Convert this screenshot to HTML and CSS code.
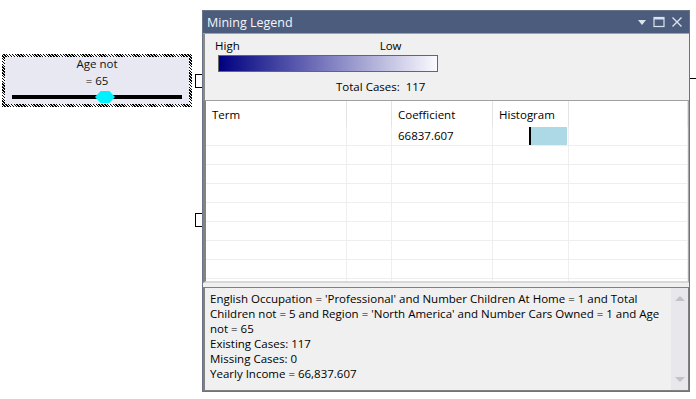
FILE: index.html
```html
<!DOCTYPE html>
<html lang="en">
<head>
    <meta charset="UTF-8">
    <title>Mining Legend</title>
    <link rel="stylesheet" href="styles.css">
</head>
<body>
    <div class="canvas">
        <!-- Tree node -->
        <div class="node">
            <div class="node-label">Age not</div>
            <div class="node-label">= 65</div>
            <div class="node-slider">
                <span class="slider-knob"></span>
            </div>
        </div>
        <div class="connector connector-top"></div>
        <div class="connector connector-mid"></div>
        <div class="edge-line"></div>

        <!-- Mining legend window -->
        <div class="window">
            <div class="titlebar">
                <span class="title">Mining Legend</span>
                <div class="title-buttons">
                    <svg width="10" height="10" viewBox="0 0 10 10"><path d="M1 3h8L5 8z" fill="#dde3ee"/></svg>
                    <svg width="12" height="12" viewBox="0 0 12 12"><rect x="1" y="1.5" width="10" height="9" fill="none" stroke="#dde3ee" stroke-width="1.2"/><rect x="1" y="1.5" width="10" height="2" fill="#dde3ee"/></svg>
                    <svg width="12" height="12" viewBox="0 0 12 12"><path d="M1.5 1.5l9 9M10.5 1.5l-9 9" stroke="#dde3ee" stroke-width="1.4"/></svg>
                </div>
            </div>

            <div class="legend">
                <div class="legend-labels">
                    <span>High</span>
                    <span>Low</span>
                </div>
                <div class="gradient-bar"></div>
                <div class="total">Total Cases:&nbsp; 117</div>
            </div>

            <div class="grid">
                <div class="grid-row grid-head">
                    <div class="cell">Term</div>
                    <div class="cell"></div>
                    <div class="cell">Coefficient</div>
                    <div class="cell">Histogram</div>
                    <div class="cell"></div>
                </div>
                <div class="grid-row">
                    <div class="cell"></div>
                    <div class="cell"></div>
                    <div class="cell">66837.607</div>
                    <div class="cell hist"><span class="hist-bar"></span></div>
                    <div class="cell"></div>
                </div>
                <div class="grid-row"><div class="cell"></div><div class="cell"></div><div class="cell"></div><div class="cell"></div><div class="cell"></div></div>
                <div class="grid-row"><div class="cell"></div><div class="cell"></div><div class="cell"></div><div class="cell"></div><div class="cell"></div></div>
                <div class="grid-row"><div class="cell"></div><div class="cell"></div><div class="cell"></div><div class="cell"></div><div class="cell"></div></div>
                <div class="grid-row"><div class="cell"></div><div class="cell"></div><div class="cell"></div><div class="cell"></div><div class="cell"></div></div>
                <div class="grid-row"><div class="cell"></div><div class="cell"></div><div class="cell"></div><div class="cell"></div><div class="cell"></div></div>
                <div class="grid-row"><div class="cell"></div><div class="cell"></div><div class="cell"></div><div class="cell"></div><div class="cell"></div></div>
                <div class="grid-row"><div class="cell"></div><div class="cell"></div><div class="cell"></div><div class="cell"></div><div class="cell"></div></div>
                <div class="grid-row"><div class="cell"></div><div class="cell"></div><div class="cell"></div><div class="cell"></div><div class="cell"></div></div>
            </div>

            <div class="details">
                <div class="details-text">
                    English Occupation = 'Professional' and Number Children At Home = 1 and Total Children not = 5 and Region = 'North America' and Number Cars Owned = 1 and Age not = 65<br>
                    Existing Cases: 117<br>
                    Missing Cases: 0<br>
                    Yearly Income = 66,837.607
                </div>
                <div class="scrollbar">
                    <svg width="10" height="6" viewBox="0 0 10 6"><path d="M0 6L5 1l5 5z" fill="#c2c2c6"/></svg>
                    <svg width="10" height="6" viewBox="0 0 10 6"><path d="M0 0h10L5 5z" fill="#c2c2c6"/></svg>
                </div>
            </div>
        </div>
    </div>
</body>
</html>
```
FILE: styles.css
```css
/* Page */
body {
    margin: 0;
    background: #fff;
    font-family: 'Open Sans', 'Noto Sans', sans-serif;
    font-size: 11.5px;
    color: #000;
}

.canvas {
    position: relative;
    width: 696px;
    height: 399px;
    overflow: hidden;
}

/* Tree node */
.node {
    position: absolute;
    left: 2px;
    top: 54px;
    width: 184px;
    height: 47px;
    border: 3px solid transparent;
    border-image: repeating-linear-gradient(45deg, #000 0 1px, #fff 1px 2px) 3;
    background: #e8e8f2;
    display: flex;
    flex-direction: column;
    align-items: center;
}

.node-label {
    line-height: 17px;
    color: #111;
}

.node-label:first-child {
    margin-top: -2px;
}

.node-slider {
    position: relative;
    margin-top: 6px;
    width: 170px;
    height: 4px;
    background: #000;
}

.slider-knob {
    position: absolute;
    left: 83px;
    top: -4px;
    width: 20px;
    height: 12px;
    background: #00f0ff;
    clip-path: polygon(28% 0, 72% 0, 100% 50%, 72% 100%, 28% 100%, 0 50%);
}

.connector {
    position: absolute;
    left: 195px;
    width: 6px;
    height: 12px;
    border: 1px solid #000;
    border-right: none;
}

.connector-top {
    top: 74px;
}

.connector-mid {
    top: 213px;
}

.edge-line {
    position: absolute;
    left: 689px;
    top: 78px;
    width: 7px;
    height: 1px;
    background: #000;
}

/* Window */
.window {
    position: absolute;
    left: 202px;
    top: 10px;
    width: 486px;
    height: 380px;
    border: 1px solid #6a7388;
    background: #f0f0f0;
    display: flex;
    flex-direction: column;
}

.titlebar {
    height: 22px;
    background: #4b5c7d;
    border-bottom: 1px solid #9aa3b4;
    display: flex;
    align-items: center;
    justify-content: space-between;
    padding: 0 6px 0 4px;
}

.title {
    color: #f4f6fa;
    font-size: 12.5px;
}

.title-buttons {
    display: flex;
    align-items: center;
    gap: 6px;
}

/* Legend */
.legend {
    height: 66px;
    border-left: 2px solid #8a8a8a;
}

.legend-labels {
    display: flex;
    gap: 140px;
    padding: 4px 0 0 10px;
    line-height: 16px;
}

.gradient-bar {
    margin: 1px 0 0 13px;
    width: 218px;
    height: 15px;
    border: 1px solid #666;
    background: linear-gradient(to right, #000080, #fafaff);
}

.total {
    margin: 7px 0 0 131px;
    line-height: 16px;
}

/* Grid */
.grid {
    height: 180px;
    background: #fff;
    border-top: 1px solid #a0a0a0;
    border-left: 3px solid #838383;
    border-right: 1px solid #a8a8a8;
    border-bottom: 2px solid #d8d8d8;
    overflow: hidden;
}

.grid-row {
    display: grid;
    grid-template-columns: 141px 45px 101px 76px 1fr;
    height: 18px;
    border-bottom: 1px solid #eeeeee;
}

.grid-row.grid-head {
    height: 26px;
    border-bottom: none;
}

.cell {
    border-right: 1px solid #eeeeee;
    padding-left: 6px;
    line-height: 18px;
}

.grid-head .cell {
    line-height: 28px;
    border-right-color: #e4e4e4;
}

.hist {
    display: flex;
    padding-left: 36px;
}

.hist-bar {
    width: 36px;
    height: 18px;
    background: #add8e6;
    border-left: 2px solid #000;
}

/* Details */
.details {
    flex: 1;
    margin-top: 4px;
    border: 1px solid #808080;
    border-left-width: 2px;
    display: flex;
}

.details-text {
    flex: 1;
    padding: 3px 8px 0 5px;
    line-height: 15px;
}

.scrollbar {
    width: 17px;
    background: #e8e8ec;
    display: flex;
    flex-direction: column;
    justify-content: space-between;
    align-items: center;
    padding: 7px 0 7px;
}
```
